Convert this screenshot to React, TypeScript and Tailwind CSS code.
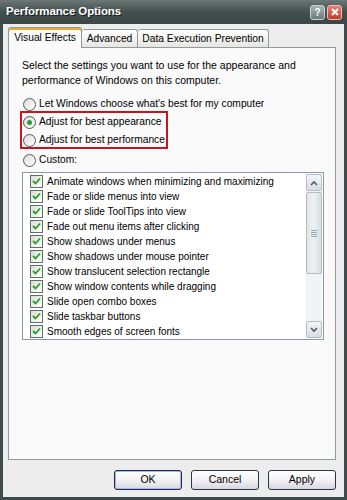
import React from "react";

const font = { fontFamily: '"Liberation Sans", Arial, sans-serif' };

function Radio({ checked }: { checked?: boolean }) {
  return (
    <span className="w-[13px] h-[13px] rounded-full border border-[#4d5a63] bg-gradient-to-br from-[#dcdcd6] to-white flex items-center justify-center shrink-0">
      {checked && <span className="w-[5px] h-[5px] rounded-full bg-[#2f9a2f]" />}
    </span>
  );
}

function Check() {
  return (
    <span className="w-[13px] h-[13px] border border-[#5e6e68] bg-gradient-to-br from-[#dcdcd6] to-white flex items-center justify-center shrink-0">
      <svg width="9" height="9" viewBox="0 0 9 9">
        <path d="M1 4 L3.5 6.5 L8 1.5" stroke="#22a022" strokeWidth="1.8" fill="none" />
      </svg>
    </span>
  );
}

const items = [
  "Animate windows when minimizing and maximizing",
  "Fade or slide menus into view",
  "Fade or slide ToolTips into view",
  "Fade out menu items after clicking",
  "Show shadows under menus",
  "Show shadows under mouse pointer",
  "Show translucent selection rectangle",
  "Show window contents while dragging",
  "Slide open combo boxes",
  "Slide taskbar buttons",
  "Smooth edges of screen fonts",
];

function ScrollBtn({ up }: { up?: boolean }) {
  return (
    <div className="h-[17px] w-full rounded-[2px] border border-[#b4bcc4] bg-gradient-to-b from-[#f4f6f8] to-[#d6dde3] flex items-center justify-center">
      <svg width="8" height="6" viewBox="0 0 8 6">
        <path d={up ? "M1 5 L4 2 L7 5" : "M1 1 L4 4 L7 1"} stroke="#4d5966" strokeWidth="1.6" fill="none" />
      </svg>
    </div>
  );
}

function Btn({ label, focus }: { label: string; focus?: boolean }) {
  return (
    <div
      className={`w-[68px] h-[20px] rounded-[3px] border flex items-center justify-center text-[10.5px] text-black bg-gradient-to-b from-white via-[#f2f2f4] to-[#d6d8e2] ${
        focus ? "border-[#1d2a58] shadow-[inset_0_0_0_1px_#a9b8e0]" : "border-[#2b3540]"
      }`}
    >
      {label}
    </div>
  );
}

export default function App() {
  return (
    <div className="w-[347px] h-[500px] bg-[#3f4a4a] flex flex-col" style={font}>
      {/* Title bar */}
      <div className="h-[24px] shrink-0 bg-gradient-to-b from-[#6c7876] via-[#44504e] to-[#3a4644] flex items-center pl-[6px] pr-[5px]">
        <span className="text-white font-bold text-[11.5px] tracking-[-0.1px] flex-1 [text-shadow:1px_1px_0_#1a2020]">
          Performance Options
        </span>
        <div className="flex gap-[2px]">
          <div className="w-[15px] h-[15px] rounded-[3px] border border-[#c8d0d0] bg-gradient-to-b from-[#a8b2b2] to-[#6e7a7a] flex items-center justify-center text-white font-bold text-[10px]">
            ?
          </div>
          <div className="w-[15px] h-[15px] rounded-[3px] border border-[#f0c0b8] bg-gradient-to-b from-[#e88070] to-[#c0392b] flex items-center justify-center">
            <svg width="8" height="8" viewBox="0 0 8 8">
              <path d="M1 1 L7 7 M7 1 L1 7" stroke="white" strokeWidth="2" />
            </svg>
          </div>
        </div>
      </div>

      {/* Body */}
      <div className="flex-1 mx-[3px] mb-[3px] bg-[#ededed] flex flex-col pt-[3px]">
        {/* Tabs */}
        <div className="flex items-end pl-[5px] h-[20px] relative z-10 text-[10.25px] text-black">
          <div className="w-[74px] h-[21px] border-x border-t border-[#919b9c] bg-[#fafafa] rounded-t-[3px] flex items-center justify-center relative -mb-[1px] shadow-[inset_0_2px_0_#f0a830]">
            Visual Effects
          </div>
          <div className="w-[56px] h-[18px] border-t border-r border-[#919b9c] bg-gradient-to-b from-white to-[#e6e6e2] rounded-t-[3px] flex items-center justify-center">
            Advanced
          </div>
          <div className="w-[131px] h-[18px] border-t border-r border-[#919b9c] bg-gradient-to-b from-white to-[#e6e6e2] rounded-t-[3px] flex items-center justify-center">
            Data Execution Prevention
          </div>
        </div>

        {/* Panel */}
        <div className="ml-[5px] w-[328px] h-[413px] border border-[#919b9c] bg-[#fafafa] pt-[10px] pl-[13px] flex flex-col">
          <p className="text-[10.5px] leading-[15px] text-black">
            Select the settings you want to use for the appearance and
            <br />
            performance of Windows on this computer.
          </p>

          <div className="relative mt-[7px] flex flex-col text-[10.25px] text-black">
            <div className="h-[18px] flex items-center gap-[3px] pl-[1px]">
              <Radio /> <span>Let Windows choose what's best for my computer</span>
            </div>
            <div className="h-[18px] flex items-center gap-[3px] pl-[1px]">
              <Radio checked /> <span>Adjust for best appearance</span>
            </div>
            <div className="h-[18px] flex items-center gap-[3px] pl-[1px]">
              <Radio /> <span>Adjust for best performance</span>
            </div>
            <div className="h-[18px] mt-[2px] flex items-center gap-[3px] pl-[1px]">
              <Radio /> <span>Custom:</span>
            </div>
            <div className="absolute left-[-2px] top-[16px] w-[148px] h-[38px] border-2 border-[#c8141c]" />
          </div>

          {/* List */}
          <div className="mt-[3px] w-[302px] h-[168px] border border-[#8e98a4] bg-white flex">
            <div className="flex-1 pt-[1px] overflow-hidden">
              {items.map((t) => (
                <div key={t} className="h-[15px] flex items-center pl-[7px] gap-[4px] text-[10px] text-black whitespace-nowrap">
                  <Check />
                  <span>{t}</span>
                </div>
              ))}
            </div>
            <div className="w-[16px] mr-[1px] my-[1px] bg-[#f1f4f6] flex flex-col">
              <ScrollBtn up />
              <div className="mt-[1px] h-[82px] rounded-[2px] border border-[#b4bcc4] bg-gradient-to-r from-[#dfe6ea] via-[#eef2f4] to-[#d5dde2] flex items-center justify-center">
                <div className="flex flex-col gap-[1px]">
                  <div className="w-[6px] h-[1px] bg-[#9aa6b0]" />
                  <div className="w-[6px] h-[1px] bg-[#9aa6b0]" />
                  <div className="w-[6px] h-[1px] bg-[#9aa6b0]" />
                  <div className="w-[6px] h-[1px] bg-[#9aa6b0]" />
                </div>
              </div>
              <div className="flex-1" />
              <ScrollBtn />
            </div>
          </div>
        </div>

        {/* Buttons */}
        <div className="flex justify-end gap-[9px] mt-[10px] w-[333px]">
          <Btn label="OK" focus />
          <Btn label="Cancel" />
          <Btn label="Apply" />
        </div>
      </div>
    </div>
  );
}
